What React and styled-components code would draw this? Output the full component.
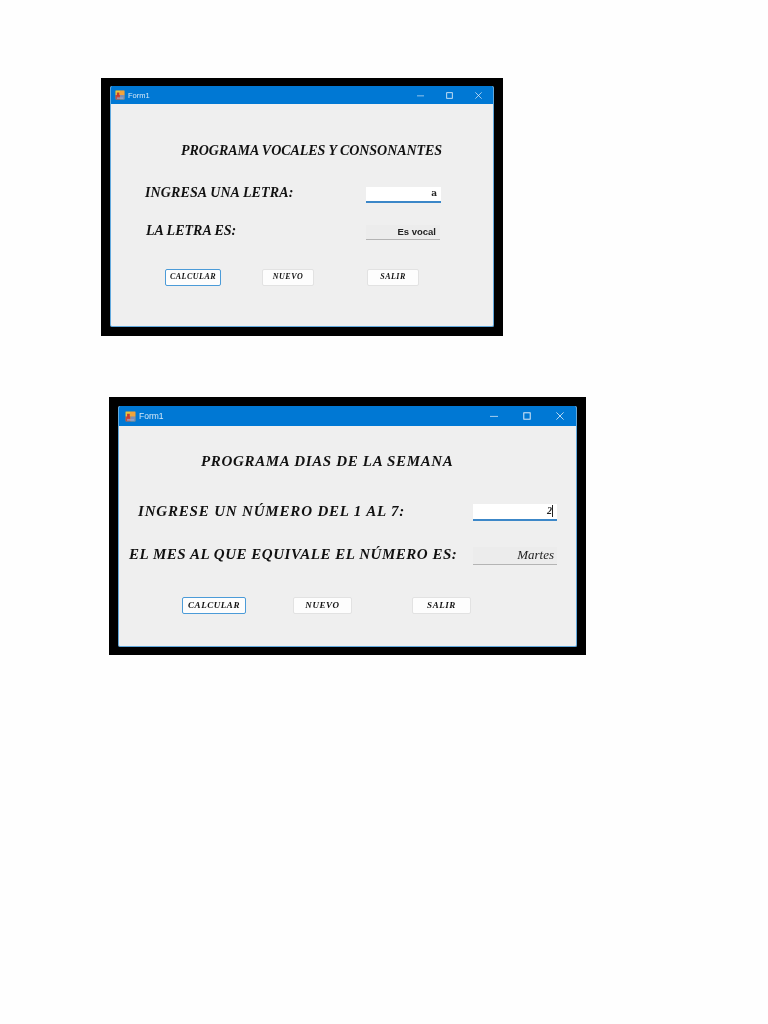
import React from "react";
import styled, { createGlobalStyle } from "styled-components";

const Global = createGlobalStyle`
  html, body { margin: 0; padding: 0; background: #fff; }
  body { font-family: "Liberation Sans", Arial, sans-serif; }
`;

const Page = styled.main`
  width: 768px;
  height: 1024px;
  background: #fefefe;
  padding-top: 78px;
  box-sizing: border-box;
  display: flex;
  flex-direction: column;
  gap: 61px;
`;

const Frame = styled.section`
  box-sizing: border-box;
  margin-left: ${(p) => p.$left}px;
  width: ${(p) => p.$width}px;
  height: 258px;
  padding: ${(p) => p.$pad};
  background: #000;
`;

const Win = styled.div`
  height: 100%;
  background: #efefef;
  display: flex;
  flex-direction: column;
  border: solid #62a9dd;
  border-width: 0 1px 1px;
  border-radius: 2px;
  box-sizing: border-box;
  overflow: hidden;
  filter: blur(0.35px);
`;

const TitleBar = styled.header`
  height: ${(p) => p.$h}px;
  flex: none;
  background: #0078d4;
  display: flex;
  align-items: center;
  padding-left: ${(p) => p.$iconLeft}px;
  color: #d5e9f8;
  font-size: ${(p) => p.$fs}px;
`;

const Caption = styled.span`
  margin-left: 3px;
`;

const Controls = styled.div`
  margin-left: auto;
  display: flex;
  align-items: center;
  gap: ${(p) => p.$gap}px;
  padding-right: ${(p) => p.$right}px;
`;

const Body = styled.div`
  flex: 1;
  display: flex;
  flex-direction: column;
  padding-top: ${(p) => p.$top}px;
`;

const Heading = styled.h1`
  margin: 0;
  margin-left: ${(p) => p.$left}px;
  height: ${(p) => p.$h}px;
  font: italic bold ${(p) => p.$fs}px/${(p) => p.$h}px "Liberation Serif", serif;
  letter-spacing: ${(p) => p.$ls}px;
  color: #111;
  white-space: nowrap;
`;

const Row = styled.div`
  display: flex;
  align-items: center;
  margin-top: ${(p) => p.$top}px;
  padding-left: ${(p) => p.$left}px;
  height: ${(p) => p.$h}px;
`;

const Label = styled.label`
  font: italic bold ${(p) => p.$fs}px "Liberation Serif", serif;
  letter-spacing: ${(p) => p.$ls}px;
  margin-bottom: ${(p) => p.$lift}px;
  color: #111;
  white-space: nowrap;
  width: ${(p) => p.$width}px;
  flex: none;
`;

const Field = styled.div`
  box-sizing: border-box;
  width: ${(p) => p.$width}px;
  height: 100%;
  flex: none;
  display: flex;
  align-items: center;
  justify-content: flex-end;
  padding-right: ${(p) => p.$right}px;
  padding-bottom: ${(p) => p.$lift}px;
  background: ${(p) => (p.$active ? "#fff" : "#ececec")};
  border-bottom: ${(p) => (p.$active ? "2px solid #3c87c8" : "1px solid #b4b4b4")};
  font: ${(p) => p.$font};
  color: #222;
`;

const Caret = styled.span`
  display: inline-block;
  width: 1px;
  height: 12px;
  background: #222;
`;

const Buttons = styled.div`
  display: flex;
  margin-top: ${(p) => p.$top}px;
  padding-left: ${(p) => p.$left}px;
`;

const Btn = styled.button`
  box-sizing: border-box;
  width: ${(p) => p.$width}px;
  height: 17px;
  margin-right: ${(p) => p.$gap || 0}px;
  padding: 0 0 2px;
  background: #fdfdfd;
  border: 1px solid ${(p) => (p.$primary ? "#4b9bd8" : "#e2e2e2")};
  border-radius: 2px;
  font: italic bold ${(p) => p.$fs}px "Liberation Serif", serif;
  letter-spacing: ${(p) => p.$ls}px;
  color: #111;
`;

const FormIcon = ({ size }) => (
  <svg width={size} height={size} viewBox="0 0 16 16" aria-hidden="true">
    <rect x="1" y="1" width="14" height="14" fill="#d9a23a" />
    <rect x="1" y="1" width="7" height="7" fill="#e8c73c" />
    <rect x="8" y="1" width="7" height="7" fill="#f2a33a" />
    <rect x="1" y="8" width="7" height="7" fill="#c94a3c" />
    <rect x="8" y="8" width="7" height="7" fill="#7d8fb5" />
    <rect x="3" y="4" width="4" height="6" fill="#c73b30" />
    <rect x="3" y="12" width="10" height="2" fill="#9aa7c4" />
  </svg>
);

const WinControls = ({ gap, right, s }) => (
  <Controls $gap={gap} $right={right}>
    <svg width={s} height={s} viewBox="0 0 10 10" aria-hidden="true">
      <path d="M0 5.5h10" stroke="#cfe4f6" strokeWidth="1" />
    </svg>
    <svg width={s} height={s} viewBox="0 0 10 10" aria-hidden="true">
      <rect x="1" y="1" width="8" height="8" fill="none" stroke="#e6f1fa" strokeWidth="1.2" />
    </svg>
    <svg width={s} height={s} viewBox="0 0 10 10" aria-hidden="true">
      <path d="M.5.5l9 9M9.5.5l-9 9" stroke="#e6f1fa" strokeWidth="1" />
    </svg>
  </Controls>
);

export default function App() {
  return (
    <Page>
      <Global />
      <Frame $left={101} $width={402} $pad="8px 9px 9px">
        <Win>
          <TitleBar $h={18} $iconLeft={4} $fs={7.5}>
            <FormIcon size={10} />
            <Caption>Form1</Caption>
            <WinControls gap={22} right={11} s={7} />
          </TitleBar>
          <Body $top={38}>
            <Heading $left={70} $h={18} $fs={14} $ls={-0.05}>PROGRAMA VOCALES Y CONSONANTES</Heading>
            <Row $top={27} $left={34} $h={16}>
              <Label $fs={14} $ls={0.12} $lift={4} $width={221}>INGRESA UNA LETRA:</Label>
              <Field $active $width={75} $right={4} $lift={2} $font='bold 9px "DejaVu Serif", serif'>a</Field>
            </Row>
            <Row $top={22} $left={35} $h={15}>
              <Label $fs={14} $ls={0} $lift={3} $width={220}>LA LETRA ES:</Label>
              <Field $width={74} $right={4} $lift={1} $font='bold 9.5px "Liberation Sans", sans-serif'>Es vocal</Field>
            </Row>
            <Buttons $top={29} $left={54}>
              <Btn $primary $width={56} $gap={41} $fs={8} $ls={0.5}>CALCULAR</Btn>
              <Btn $width={52} $gap={53} $fs={8} $ls={0.5}>NUEVO</Btn>
              <Btn $width={52} $fs={8} $ls={0.5}>SALIR</Btn>
            </Buttons>
          </Body>
        </Win>
      </Frame>
      <Frame $left={109} $width={477} $pad="9px 9px 8px">
        <Win>
          <TitleBar $h={20} $iconLeft={6} $fs={8.5}>
            <FormIcon size={11} />
            <Caption>Form1</Caption>
            <WinControls gap={25} right={12} s={8} />
          </TitleBar>
          <Body $top={26}>
            <Heading $left={82} $h={18} $fs={15} $ls={0.67}>PROGRAMA DIAS DE LA SEMANA</Heading>
            <Row $top={34} $left={19} $h={17}>
              <Label $fs={15} $ls={0.82} $lift={3} $width={335}>INGRESE UN NÚMERO DEL 1 AL 7:</Label>
              <Field $active $width={84} $right={4} $lift={2} $font='italic bold 10px "Liberation Serif", serif'>2<Caret /></Field>
            </Row>
            <Row $top={26} $left={10} $h={18}>
              <Label $fs={15} $ls={0.52} $lift={4} $width={344}>EL MES AL QUE EQUIVALE EL NÚMERO ES:</Label>
              <Field $width={84} $right={3} $lift={2} $font='italic 13px "Liberation Serif", serif'>Martes</Field>
            </Row>
            <Buttons $top={32} $left={63}>
              <Btn $primary $width={64} $gap={47} $fs={9} $ls={0.55}>CALCULAR</Btn>
              <Btn $width={59} $gap={60} $fs={9} $ls={0.55}>NUEVO</Btn>
              <Btn $width={59} $fs={9} $ls={0.55}>SALIR</Btn>
            </Buttons>
          </Body>
        </Win>
      </Frame>
    </Page>
  );
}
